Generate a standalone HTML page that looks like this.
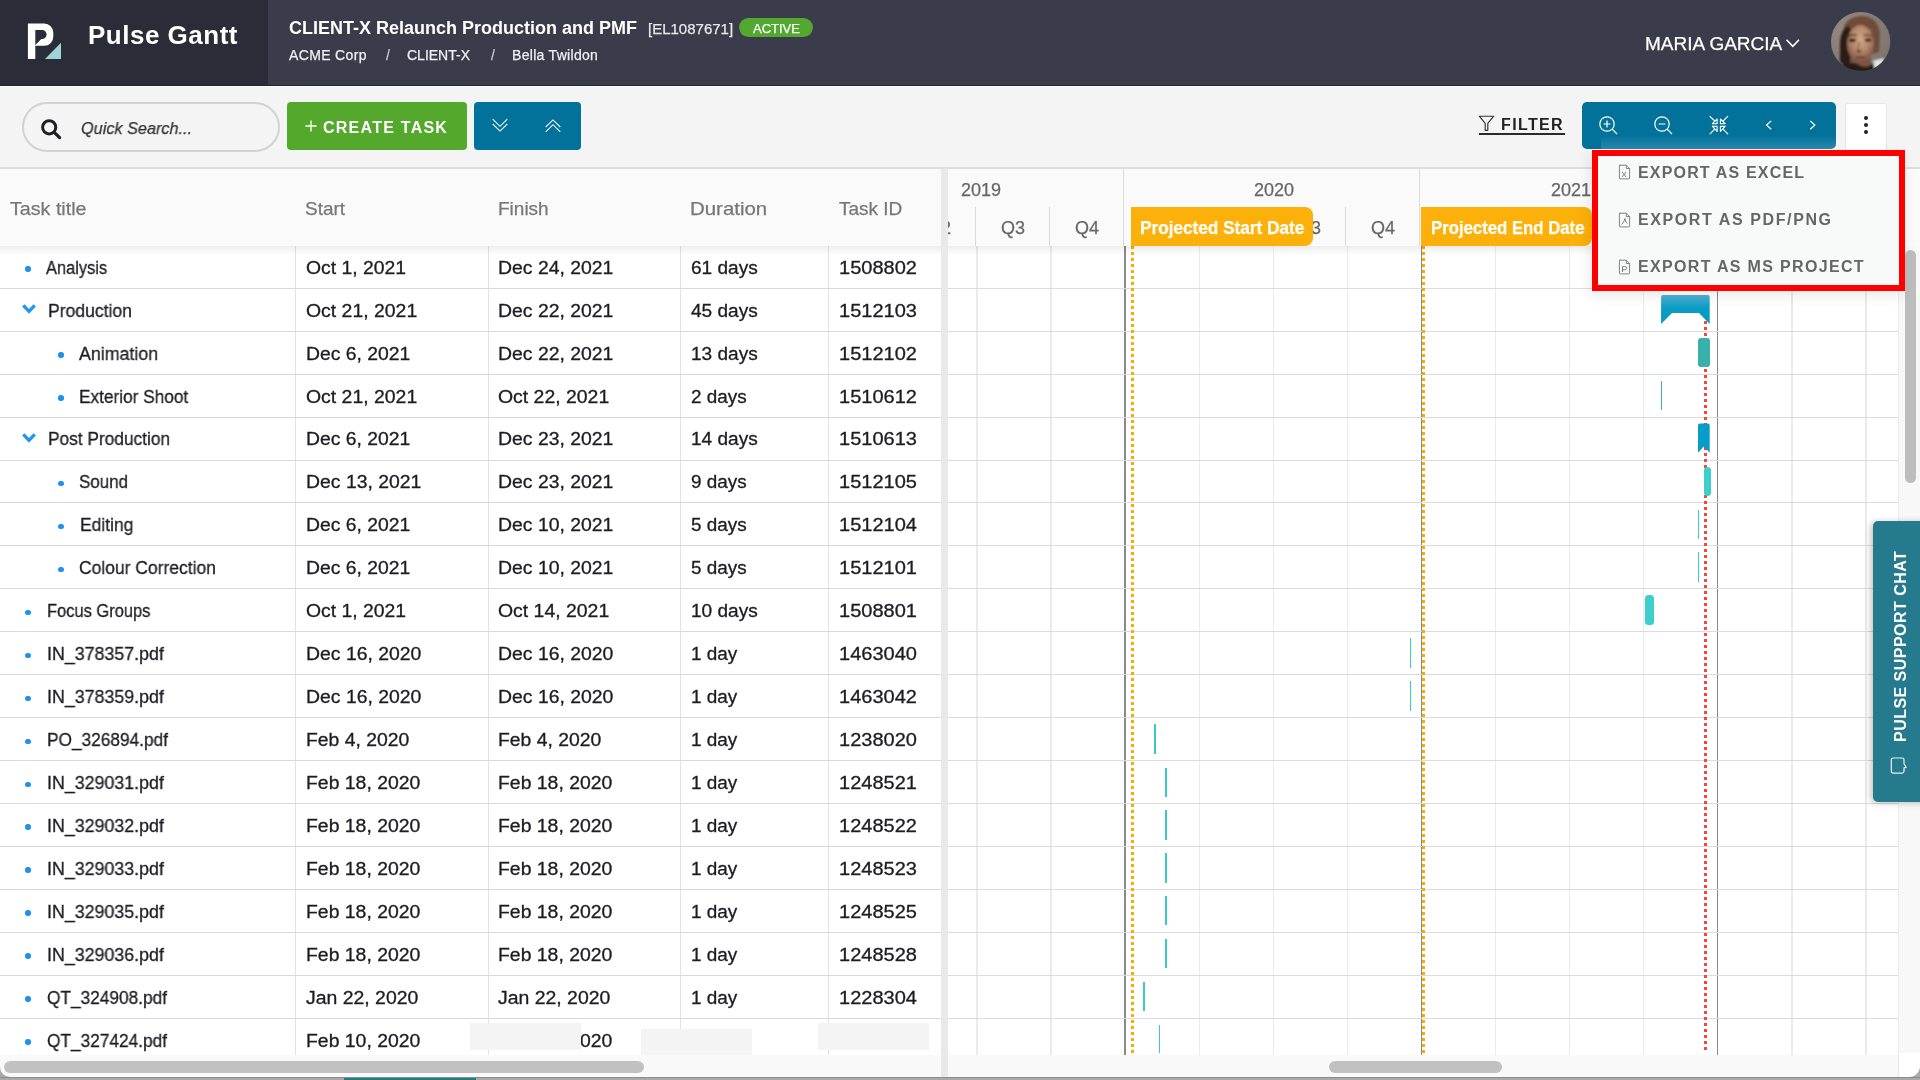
<!DOCTYPE html>
<html><head><meta charset="utf-8"><title>Pulse Gantt</title>
<style>
html,body{margin:0;padding:0;}
body{width:1920px;height:1080px;overflow:hidden;position:relative;background:#f4f4f4;font-family:"Liberation Sans",sans-serif;}
.t{position:absolute;white-space:nowrap;line-height:1;will-change:transform;}
.r{position:absolute;}
svg.r{overflow:visible;}
</style></head><body>
<div class="r" style="left:0px;top:0px;width:1920px;height:86px;background:#3a3b4b;"></div>
<div class="r" style="left:0px;top:0px;width:268px;height:86px;background:#2a2d38;"></div>
<div class="r" style="left:0px;top:85px;width:1920px;height:1px;background:#23242f;"></div>
<div class="r" style="left:0px;top:86px;width:1920px;height:1.3px;background:#ffffff;"></div>
<svg class="r" style="left:0;top:0" width="80" height="85" viewBox="0 0 80 85">
<path d="M27.9 23.6 H44.3 A9 9 0 0 1 53.3 32.6 V36.8 A9 9 0 0 1 44.3 45.8 H35.3 V59 H27.9 Z M35.3 30 H42.1 A4.5 4.5 0 0 1 42.1 39 H41.3 L35.3 45.1 Z" fill="#ffffff" fill-rule="evenodd"/>
<path d="M45 59 L61 42.8 V59 Z" fill="#a0d5d5"/>
</svg>
<div class="t" style="left:88.44px;top:22.29px;font-size:26px;color:#fff;font-weight:700;letter-spacing:0.5px;">Pulse Gantt</div>
<div class="t" style="left:288.92px;top:18.56px;font-size:18px;color:#fff;font-weight:700;">CLIENT-X Relaunch Production and PMF</div>
<div class="t" style="left:648.40px;top:20.90px;font-size:15px;color:#e8e8ea;-webkit-text-stroke:0.25px #e8e8ea;">[EL1087671]</div>
<div class="r" style="left:739px;top:18px;width:74px;height:19px;background:#53a92f;border-radius:10px;"></div>
<div class="t" style="left:752.62px;top:21.80px;font-size:13px;color:#fff;-webkit-text-stroke:0.25px #fff;">ACTIVE</div>
<div class="t" style="left:289.16px;top:48.45px;font-size:14px;color:#f0f0f2;letter-spacing:0.35px;-webkit-text-stroke:0.25px #f0f0f2;">ACME Corp</div>
<div class="t" style="left:386.16px;top:48.45px;font-size:14px;color:#c8c8cc;-webkit-text-stroke:0.25px #c8c8cc;">/</div>
<div class="t" style="left:407.16px;top:48.45px;font-size:14px;color:#f0f0f2;-webkit-text-stroke:0.25px #f0f0f2;">CLIENT-X</div>
<div class="t" style="left:490.66px;top:48.45px;font-size:14px;color:#c8c8cc;-webkit-text-stroke:0.25px #c8c8cc;">/</div>
<div class="t" style="left:511.76px;top:48.45px;font-size:14px;color:#f0f0f2;letter-spacing:0.3px;-webkit-text-stroke:0.25px #f0f0f2;">Bella Twildon</div>
<div class="t" style="left:1644.86px;top:34.02px;font-size:19px;color:#fff;-webkit-text-stroke:0.25px #fff;">MARIA GARCIA</div>
<svg class="r" style="left:1784px;top:36px" width="18" height="14" viewBox="0 0 18 14"><path d="M2.5 3.8 L8.8 10.4 L15 3.8" fill="none" stroke="#fff" stroke-width="1.6"/></svg>
<svg class="r" style="left:1831px;top:11.7px" width="59.3" height="59.3" viewBox="0 0 59.3 59.3"><defs><clipPath id="avc"><circle cx="29.65" cy="29.65" r="29.65"/></clipPath>
<radialGradient id="face" cx="0.5" cy="0.38" r="0.62"><stop offset="0" stop-color="#d2a688"/><stop offset="0.5" stop-color="#b98a6c"/><stop offset="1" stop-color="#7a5040"/></radialGradient>
<radialGradient id="bgav" cx="0.3" cy="0.3" r="0.8"><stop offset="0" stop-color="#968c83"/><stop offset="1" stop-color="#7c736b"/></radialGradient>
<filter id="avb" x="-20%" y="-20%" width="140%" height="140%"><feGaussianBlur stdDeviation="0.9"/></filter></defs>
<g clip-path="url(#avc)">
<rect x="0" y="0" width="60" height="60" fill="url(#bgav)"/><g filter="url(#avb)">
<path d="M12 22 Q12 5 30 4 Q47 4 49 22 L48 40 L41 42 L40 18 Q30 12 19 18 L18 48 L10 46 Z" fill="#6f4b3b"/>
<path d="M9 30 Q10 16 18 14 L21 20 L20 50 Q14 54 9 50 Z" fill="#2c1e19"/>
<path d="M20 42 H39 L41 58 H18 Z" fill="#7d5443"/>
<ellipse cx="29.5" cy="32" rx="13.5" ry="19" fill="url(#face)"/>
<path d="M16.5 24.5 Q21 22 26 23.5" fill="none" stroke="#3b2a22" stroke-width="1.6"/>
<path d="M32.5 23.5 Q37 22 41.5 24.5" fill="none" stroke="#4a3428" stroke-width="1.4"/>
<ellipse cx="21.5" cy="28.3" rx="3.6" ry="1.9" fill="#2f211b"/>
<ellipse cx="37" cy="28" rx="3.4" ry="1.8" fill="#3e2c23"/>
<path d="M28.5 30 Q27 35 26.5 38.5" fill="none" stroke="#8a5e48" stroke-width="1.3"/>
<ellipse cx="28" cy="39.3" rx="2.6" ry="1.3" fill="#5e3c2e"/>
<ellipse cx="29.5" cy="45.2" rx="5.2" ry="1.4" fill="#73483a"/>
<path d="M11 52 Q22 48 30 54 Q38 57 44 49 L47 60 H10 Z" fill="#281a15"/>
<path d="M42 48.5 L53 46 L51 59 L44 60 Z" fill="#e2e2e2"/>
</g></g></svg>
<div class="r" style="left:0px;top:87.3px;width:1920px;height:80px;background:#f4f4f4;"></div>
<div class="r" style="left:22px;top:102px;width:254px;height:46px;border:2px solid #d2d2d2;border-radius:26px;background:#f4f4f4;"></div>
<svg class="r" style="left:38px;top:116px" width="26" height="26" viewBox="0 0 26 26"><circle cx="11.2" cy="11.3" r="6.6" fill="none" stroke="#1e1e24" stroke-width="3"/><path d="M16 16.2 L21.6 21.6" stroke="#1e1e24" stroke-width="3.2" stroke-linecap="round"/></svg>
<div class="t" style="left:80.98px;top:120.31px;font-size:17px;color:#333;font-style:italic;transform:scaleX(0.956);transform-origin:0 0;-webkit-text-stroke:0.25px #333;">Quick Search...</div>
<div class="r" style="left:287px;top:102px;width:180px;height:48px;background:#54a92d;border-radius:4px;"></div>
<svg class="r" style="left:303px;top:118px" width="16" height="16" viewBox="0 0 16 16"><path d="M8 2.6 V13.4 M2.4 8 H13.6" stroke="#fff" stroke-width="1.35"/></svg>
<div class="t" style="left:323.44px;top:119.76px;font-size:16px;color:#fff;font-weight:700;letter-spacing:1.25px;">CREATE TASK</div>
<div class="r" style="left:474px;top:102px;width:107px;height:48px;background:#03729b;border-radius:4px;"></div>
<svg class="r" style="left:487.6px;top:114px" width="24" height="22" viewBox="0 0 24 22"><path d="M4.7 5.2 L12 12.3 L19.3 5.2 M4.7 10 L12 17.1 L19.3 10" fill="none" stroke="#f0f6f8" stroke-width="1.1"/></svg>
<svg class="r" style="left:541px;top:114.8px" width="24" height="22" viewBox="0 0 24 22"><path d="M4.7 12 L12 4.9 L19.3 12 M4.7 16.8 L12 9.7 L19.3 16.8" fill="none" stroke="#f0f6f8" stroke-width="1.1"/></svg>
<svg class="r" style="left:1476px;top:113px" width="20" height="20" viewBox="0 0 20 20"><path d="M3.3 3.2 H17.7 L11.8 10.4 V17.3 L9.2 17.3 V10.4 Z" fill="none" stroke="#333" stroke-width="1.15" stroke-linejoin="round"/></svg>
<div class="t" style="left:1501.04px;top:116.66px;font-size:16px;color:#222;font-weight:700;letter-spacing:1.36px;">FILTER</div>
<div class="r" style="left:1479px;top:133.4px;width:86px;height:1.9px;background:#2a2a2a;"></div>
<div class="r" style="left:1582px;top:102px;width:254px;height:47px;background:#03729b;border-radius:5px;"></div>
<svg class="r" style="left:1594px;top:111px" width="28" height="28" viewBox="0 0 28 28"><circle cx="13" cy="13" r="7.2" fill="none" stroke="#fff" stroke-width="1.2"/><path d="M13 9.6 V16.4 M9.6 13 H16.4 M18.2 18.2 L23 23" stroke="#fff" stroke-width="1.2"/></svg>
<svg class="r" style="left:1649px;top:111px" width="28" height="28" viewBox="0 0 28 28"><circle cx="13" cy="13" r="7.2" fill="none" stroke="#fff" stroke-width="1.2"/><path d="M9.6 13 H16.4 M18.2 18.2 L23 23" stroke="#fff" stroke-width="1.2"/></svg>
<svg class="r" style="left:1706px;top:112px" width="26" height="26" viewBox="0 0 26 26"><g fill="none" stroke="#fff" stroke-width="1.1" stroke-linejoin="round" stroke-linecap="round"><path d="M4 4.3 L8.7 9"/><path d="M6.4 11.7 L11.1 7 V11.7 Z"/><path d="M21.7 4.3 L17.1 9"/><path d="M14.4 7 L19.2 11.7 H14.4 Z"/><path d="M4 21.8 L8.7 17.2"/><path d="M6.4 14.4 H11.1 V19.4 Z"/><path d="M21.7 21.8 L17.1 17.2"/><path d="M14.4 14.4 H19.2 L14.4 19.4 Z"/></g></svg>
<svg class="r" style="left:1760px;top:116px" width="16" height="18" viewBox="0 0 16 18"><path d="M11.2 4.9 L6.6 9.1 L11.2 13.3" fill="none" stroke="#fff" stroke-width="1.25"/></svg>
<svg class="r" style="left:1804px;top:116px" width="16" height="18" viewBox="0 0 16 18"><path d="M6.2 4.9 L10.8 9.1 L6.2 13.3" fill="none" stroke="#fff" stroke-width="1.25"/></svg>
<div class="r" style="left:1845.3px;top:102.5px;width:40px;height:46px;background:#fff;border:1.5px solid #e6e6e6;border-radius:3px;"></div>
<div class="r" style="left:1864px;top:116.2px;width:4.2px;height:4.2px;border-radius:50%;background:#222;"></div>
<div class="r" style="left:1864px;top:123.1px;width:4.2px;height:4.2px;border-radius:50%;background:#222;"></div>
<div class="r" style="left:1864px;top:129.9px;width:4.2px;height:4.2px;border-radius:50%;background:#222;"></div>
<div class="r" style="left:0px;top:167px;width:1920px;height:2px;background:#dcdddd;"></div>
<div class="r" style="left:0px;top:169px;width:1920px;height:886px;background:#ffffff;"></div>
<div class="r" style="left:0px;top:1055px;width:1920px;height:25px;background:#a9a9a9;"></div>
<div class="r" style="left:0px;top:169px;width:941px;height:77px;background:#fafafa;"></div>
<div class="r" style="left:948px;top:169px;width:950px;height:77px;background:#fafafa;"></div>
<div class="r" style="left:1898px;top:169px;width:22px;height:77px;background:#fafafa;"></div>
<div class="t" style="left:9.66px;top:198.92px;font-size:19px;color:#777;transform:scaleX(1.035);transform-origin:0 0;-webkit-text-stroke:0.25px #777;">Task title</div>
<div class="t" style="left:305.46px;top:198.92px;font-size:19px;color:#777;-webkit-text-stroke:0.25px #777;">Start</div>
<div class="t" style="left:497.86px;top:198.92px;font-size:19px;color:#777;-webkit-text-stroke:0.25px #777;">Finish</div>
<div class="t" style="left:690.46px;top:198.92px;font-size:19px;color:#777;transform:scaleX(1.075);transform-origin:0 0;-webkit-text-stroke:0.25px #777;">Duration</div>
<div class="t" style="left:838.86px;top:198.92px;font-size:19px;color:#777;-webkit-text-stroke:0.25px #777;">Task ID</div>
<div class="r" style="left:0;top:246px;width:941px;height:809px;overflow:hidden;">
<div class="r" style="left:295px;top:0px;width:1px;height:809px;background:#e2e2e2;"></div>
<div class="r" style="left:488px;top:0px;width:1px;height:809px;background:#e2e2e2;"></div>
<div class="r" style="left:680px;top:0px;width:1px;height:809px;background:#e2e2e2;"></div>
<div class="r" style="left:828px;top:0px;width:1px;height:809px;background:#e2e2e2;"></div>
<div class="r" style="left:0;top:42px;width:941px;height:1px;background:#d9d9d9;"></div>
<div class="r" style="left:25.3px;top:20.40px;width:5.4px;height:5.4px;border-radius:50%;background:#1f92f0;"></div>
<div class="t" style="left:45.92px;top:12.76px;font-size:18px;color:#1c1c22;transform:scaleX(0.913);transform-origin:0 0;-webkit-text-stroke:0.3px #1c1c22;">Analysis</div>
<div class="t" style="left:305.52px;top:12.76px;font-size:18px;color:#1c1c22;transform:scaleX(1.075638949754439);transform-origin:0 0;-webkit-text-stroke:0.3px #1c1c22;">Oct 1, 2021</div>
<div class="t" style="left:497.92px;top:12.76px;font-size:18px;color:#1c1c22;transform:scaleX(1.0774293770007388);transform-origin:0 0;-webkit-text-stroke:0.3px #1c1c22;">Dec 24, 2021</div>
<div class="t" style="left:690.52px;top:12.76px;font-size:18px;color:#1c1c22;transform:scaleX(1.0585441935034157);transform-origin:0 0;-webkit-text-stroke:0.3px #1c1c22;">61 days</div>
<div class="t" style="left:838.92px;top:12.76px;font-size:18px;color:#1c1c22;transform:scaleX(1.1115);transform-origin:0 0;-webkit-text-stroke:0.3px #1c1c22;">1508802</div>
<div class="r" style="left:0;top:85px;width:941px;height:1px;background:#d9d9d9;"></div>
<svg class="r" style="left:20px;top:57.43px" width="18" height="14" viewBox="0 0 18 14"><path d="M3.3 2.3 L9 8.3 L14.7 2.3" fill="none" stroke="#2196f3" stroke-width="3.3"/></svg>
<div class="t" style="left:48.12px;top:55.69px;font-size:18px;color:#1c1c22;transform:scaleX(0.976);transform-origin:0 0;-webkit-text-stroke:0.3px #1c1c22;">Production</div>
<div class="t" style="left:305.52px;top:55.69px;font-size:18px;color:#1c1c22;transform:scaleX(1.0791220005116398);transform-origin:0 0;-webkit-text-stroke:0.3px #1c1c22;">Oct 21, 2021</div>
<div class="t" style="left:497.92px;top:55.69px;font-size:18px;color:#1c1c22;transform:scaleX(1.0774293770007388);transform-origin:0 0;-webkit-text-stroke:0.3px #1c1c22;">Dec 22, 2021</div>
<div class="t" style="left:690.52px;top:55.69px;font-size:18px;color:#1c1c22;transform:scaleX(1.0585441935034157);transform-origin:0 0;-webkit-text-stroke:0.3px #1c1c22;">45 days</div>
<div class="t" style="left:838.92px;top:55.69px;font-size:18px;color:#1c1c22;transform:scaleX(1.1115);transform-origin:0 0;-webkit-text-stroke:0.3px #1c1c22;">1512103</div>
<div class="r" style="left:0;top:128px;width:941px;height:1px;background:#d9d9d9;"></div>
<div class="r" style="left:58.3px;top:106.26px;width:5.4px;height:5.4px;border-radius:50%;background:#1f92f0;"></div>
<div class="t" style="left:78.72px;top:98.62px;font-size:18px;color:#1c1c22;transform:scaleX(0.989);transform-origin:0 0;-webkit-text-stroke:0.3px #1c1c22;">Animation</div>
<div class="t" style="left:305.52px;top:98.62px;font-size:18px;color:#1c1c22;transform:scaleX(1.073915574067367);transform-origin:0 0;-webkit-text-stroke:0.3px #1c1c22;">Dec 6, 2021</div>
<div class="t" style="left:497.92px;top:98.62px;font-size:18px;color:#1c1c22;transform:scaleX(1.0774293770007388);transform-origin:0 0;-webkit-text-stroke:0.3px #1c1c22;">Dec 22, 2021</div>
<div class="t" style="left:690.52px;top:98.62px;font-size:18px;color:#1c1c22;transform:scaleX(1.0585441935034157);transform-origin:0 0;-webkit-text-stroke:0.3px #1c1c22;">13 days</div>
<div class="t" style="left:838.92px;top:98.62px;font-size:18px;color:#1c1c22;transform:scaleX(1.1115);transform-origin:0 0;-webkit-text-stroke:0.3px #1c1c22;">1512102</div>
<div class="r" style="left:0;top:171px;width:941px;height:1px;background:#d9d9d9;"></div>
<div class="r" style="left:58.3px;top:149.19px;width:5.4px;height:5.4px;border-radius:50%;background:#1f92f0;"></div>
<div class="t" style="left:79.22px;top:141.55px;font-size:18px;color:#1c1c22;transform:scaleX(0.958);transform-origin:0 0;-webkit-text-stroke:0.3px #1c1c22;">Exterior Shoot</div>
<div class="t" style="left:305.52px;top:141.55px;font-size:18px;color:#1c1c22;transform:scaleX(1.0791220005116398);transform-origin:0 0;-webkit-text-stroke:0.3px #1c1c22;">Oct 21, 2021</div>
<div class="t" style="left:497.92px;top:141.55px;font-size:18px;color:#1c1c22;transform:scaleX(1.0791220005116398);transform-origin:0 0;-webkit-text-stroke:0.3px #1c1c22;">Oct 22, 2021</div>
<div class="t" style="left:690.52px;top:141.55px;font-size:18px;color:#1c1c22;transform:scaleX(1.0485480609877362);transform-origin:0 0;-webkit-text-stroke:0.3px #1c1c22;">2 days</div>
<div class="t" style="left:838.92px;top:141.55px;font-size:18px;color:#1c1c22;transform:scaleX(1.1115);transform-origin:0 0;-webkit-text-stroke:0.3px #1c1c22;">1510612</div>
<div class="r" style="left:0;top:214px;width:941px;height:1px;background:#d9d9d9;"></div>
<svg class="r" style="left:20px;top:186.22px" width="18" height="14" viewBox="0 0 18 14"><path d="M3.3 2.3 L9 8.3 L14.7 2.3" fill="none" stroke="#2196f3" stroke-width="3.3"/></svg>
<div class="t" style="left:48.12px;top:184.48px;font-size:18px;color:#1c1c22;transform:scaleX(0.961);transform-origin:0 0;-webkit-text-stroke:0.3px #1c1c22;">Post Production</div>
<div class="t" style="left:305.52px;top:184.48px;font-size:18px;color:#1c1c22;transform:scaleX(1.073915574067367);transform-origin:0 0;-webkit-text-stroke:0.3px #1c1c22;">Dec 6, 2021</div>
<div class="t" style="left:497.92px;top:184.48px;font-size:18px;color:#1c1c22;transform:scaleX(1.0774293770007388);transform-origin:0 0;-webkit-text-stroke:0.3px #1c1c22;">Dec 23, 2021</div>
<div class="t" style="left:690.52px;top:184.48px;font-size:18px;color:#1c1c22;transform:scaleX(1.0585441935034157);transform-origin:0 0;-webkit-text-stroke:0.3px #1c1c22;">14 days</div>
<div class="t" style="left:838.92px;top:184.48px;font-size:18px;color:#1c1c22;transform:scaleX(1.1115);transform-origin:0 0;-webkit-text-stroke:0.3px #1c1c22;">1510613</div>
<div class="r" style="left:0;top:256px;width:941px;height:1px;background:#d9d9d9;"></div>
<div class="r" style="left:58.3px;top:235.05px;width:5.4px;height:5.4px;border-radius:50%;background:#1f92f0;"></div>
<div class="t" style="left:79.22px;top:227.41px;font-size:18px;color:#1c1c22;transform:scaleX(0.942);transform-origin:0 0;-webkit-text-stroke:0.3px #1c1c22;">Sound</div>
<div class="t" style="left:305.52px;top:227.41px;font-size:18px;color:#1c1c22;transform:scaleX(1.0774293770007388);transform-origin:0 0;-webkit-text-stroke:0.3px #1c1c22;">Dec 13, 2021</div>
<div class="t" style="left:497.92px;top:227.41px;font-size:18px;color:#1c1c22;transform:scaleX(1.0774293770007388);transform-origin:0 0;-webkit-text-stroke:0.3px #1c1c22;">Dec 23, 2021</div>
<div class="t" style="left:690.52px;top:227.41px;font-size:18px;color:#1c1c22;transform:scaleX(1.0485480609877362);transform-origin:0 0;-webkit-text-stroke:0.3px #1c1c22;">9 days</div>
<div class="t" style="left:838.92px;top:227.41px;font-size:18px;color:#1c1c22;transform:scaleX(1.1115);transform-origin:0 0;-webkit-text-stroke:0.3px #1c1c22;">1512105</div>
<div class="r" style="left:0;top:299px;width:941px;height:1px;background:#d9d9d9;"></div>
<div class="r" style="left:58.3px;top:277.98px;width:5.4px;height:5.4px;border-radius:50%;background:#1f92f0;"></div>
<div class="t" style="left:79.62px;top:270.34px;font-size:18px;color:#1c1c22;transform:scaleX(0.97);transform-origin:0 0;-webkit-text-stroke:0.3px #1c1c22;">Editing</div>
<div class="t" style="left:305.52px;top:270.34px;font-size:18px;color:#1c1c22;transform:scaleX(1.073915574067367);transform-origin:0 0;-webkit-text-stroke:0.3px #1c1c22;">Dec 6, 2021</div>
<div class="t" style="left:497.92px;top:270.34px;font-size:18px;color:#1c1c22;transform:scaleX(1.0774293770007388);transform-origin:0 0;-webkit-text-stroke:0.3px #1c1c22;">Dec 10, 2021</div>
<div class="t" style="left:690.52px;top:270.34px;font-size:18px;color:#1c1c22;transform:scaleX(1.0485480609877362);transform-origin:0 0;-webkit-text-stroke:0.3px #1c1c22;">5 days</div>
<div class="t" style="left:838.92px;top:270.34px;font-size:18px;color:#1c1c22;transform:scaleX(1.1115);transform-origin:0 0;-webkit-text-stroke:0.3px #1c1c22;">1512104</div>
<div class="r" style="left:0;top:342px;width:941px;height:1px;background:#d9d9d9;"></div>
<div class="r" style="left:58.3px;top:320.91px;width:5.4px;height:5.4px;border-radius:50%;background:#1f92f0;"></div>
<div class="t" style="left:79.32px;top:313.27px;font-size:18px;color:#1c1c22;transform:scaleX(0.971);transform-origin:0 0;-webkit-text-stroke:0.3px #1c1c22;">Colour Correction</div>
<div class="t" style="left:305.52px;top:313.27px;font-size:18px;color:#1c1c22;transform:scaleX(1.073915574067367);transform-origin:0 0;-webkit-text-stroke:0.3px #1c1c22;">Dec 6, 2021</div>
<div class="t" style="left:497.92px;top:313.27px;font-size:18px;color:#1c1c22;transform:scaleX(1.0774293770007388);transform-origin:0 0;-webkit-text-stroke:0.3px #1c1c22;">Dec 10, 2021</div>
<div class="t" style="left:690.52px;top:313.27px;font-size:18px;color:#1c1c22;transform:scaleX(1.0485480609877362);transform-origin:0 0;-webkit-text-stroke:0.3px #1c1c22;">5 days</div>
<div class="t" style="left:838.92px;top:313.27px;font-size:18px;color:#1c1c22;transform:scaleX(1.1115);transform-origin:0 0;-webkit-text-stroke:0.3px #1c1c22;">1512101</div>
<div class="r" style="left:0;top:385px;width:941px;height:1px;background:#d9d9d9;"></div>
<div class="r" style="left:25.3px;top:363.84px;width:5.4px;height:5.4px;border-radius:50%;background:#1f92f0;"></div>
<div class="t" style="left:46.82px;top:356.20px;font-size:18px;color:#1c1c22;transform:scaleX(0.915);transform-origin:0 0;-webkit-text-stroke:0.3px #1c1c22;">Focus Groups</div>
<div class="t" style="left:305.52px;top:356.20px;font-size:18px;color:#1c1c22;transform:scaleX(1.075638949754439);transform-origin:0 0;-webkit-text-stroke:0.3px #1c1c22;">Oct 1, 2021</div>
<div class="t" style="left:497.92px;top:356.20px;font-size:18px;color:#1c1c22;transform:scaleX(1.0791220005116398);transform-origin:0 0;-webkit-text-stroke:0.3px #1c1c22;">Oct 14, 2021</div>
<div class="t" style="left:690.52px;top:356.20px;font-size:18px;color:#1c1c22;transform:scaleX(1.0585441935034157);transform-origin:0 0;-webkit-text-stroke:0.3px #1c1c22;">10 days</div>
<div class="t" style="left:838.92px;top:356.20px;font-size:18px;color:#1c1c22;transform:scaleX(1.1115);transform-origin:0 0;-webkit-text-stroke:0.3px #1c1c22;">1508801</div>
<div class="r" style="left:0;top:428px;width:941px;height:1px;background:#d9d9d9;"></div>
<div class="r" style="left:25.3px;top:406.77px;width:5.4px;height:5.4px;border-radius:50%;background:#1f92f0;"></div>
<div class="t" style="left:46.72px;top:399.13px;font-size:18px;color:#1c1c22;transform:scaleX(0.99);transform-origin:0 0;-webkit-text-stroke:0.3px #1c1c22;">IN_378357.pdf</div>
<div class="t" style="left:305.52px;top:399.13px;font-size:18px;color:#1c1c22;transform:scaleX(1.0774293770007388);transform-origin:0 0;-webkit-text-stroke:0.3px #1c1c22;">Dec 16, 2020</div>
<div class="t" style="left:497.92px;top:399.13px;font-size:18px;color:#1c1c22;transform:scaleX(1.0774293770007388);transform-origin:0 0;-webkit-text-stroke:0.3px #1c1c22;">Dec 16, 2020</div>
<div class="t" style="left:690.52px;top:399.13px;font-size:18px;color:#1c1c22;transform:scaleX(1.051541996007984);transform-origin:0 0;-webkit-text-stroke:0.3px #1c1c22;">1 day</div>
<div class="t" style="left:838.92px;top:399.13px;font-size:18px;color:#1c1c22;transform:scaleX(1.1115);transform-origin:0 0;-webkit-text-stroke:0.3px #1c1c22;">1463040</div>
<div class="r" style="left:0;top:471px;width:941px;height:1px;background:#d9d9d9;"></div>
<div class="r" style="left:25.3px;top:449.70px;width:5.4px;height:5.4px;border-radius:50%;background:#1f92f0;"></div>
<div class="t" style="left:46.72px;top:442.06px;font-size:18px;color:#1c1c22;transform:scaleX(0.99);transform-origin:0 0;-webkit-text-stroke:0.3px #1c1c22;">IN_378359.pdf</div>
<div class="t" style="left:305.52px;top:442.06px;font-size:18px;color:#1c1c22;transform:scaleX(1.0774293770007388);transform-origin:0 0;-webkit-text-stroke:0.3px #1c1c22;">Dec 16, 2020</div>
<div class="t" style="left:497.92px;top:442.06px;font-size:18px;color:#1c1c22;transform:scaleX(1.0774293770007388);transform-origin:0 0;-webkit-text-stroke:0.3px #1c1c22;">Dec 16, 2020</div>
<div class="t" style="left:690.52px;top:442.06px;font-size:18px;color:#1c1c22;transform:scaleX(1.051541996007984);transform-origin:0 0;-webkit-text-stroke:0.3px #1c1c22;">1 day</div>
<div class="t" style="left:838.92px;top:442.06px;font-size:18px;color:#1c1c22;transform:scaleX(1.1115);transform-origin:0 0;-webkit-text-stroke:0.3px #1c1c22;">1463042</div>
<div class="r" style="left:0;top:514px;width:941px;height:1px;background:#d9d9d9;"></div>
<div class="r" style="left:25.3px;top:492.63px;width:5.4px;height:5.4px;border-radius:50%;background:#1f92f0;"></div>
<div class="t" style="left:46.82px;top:484.99px;font-size:18px;color:#1c1c22;transform:scaleX(0.96);transform-origin:0 0;-webkit-text-stroke:0.3px #1c1c22;">PO_326894.pdf</div>
<div class="t" style="left:305.52px;top:484.99px;font-size:18px;color:#1c1c22;transform:scaleX(1.0743292379471228);transform-origin:0 0;-webkit-text-stroke:0.3px #1c1c22;">Feb 4, 2020</div>
<div class="t" style="left:497.92px;top:484.99px;font-size:18px;color:#1c1c22;transform:scaleX(1.0743292379471228);transform-origin:0 0;-webkit-text-stroke:0.3px #1c1c22;">Feb 4, 2020</div>
<div class="t" style="left:690.52px;top:484.99px;font-size:18px;color:#1c1c22;transform:scaleX(1.051541996007984);transform-origin:0 0;-webkit-text-stroke:0.3px #1c1c22;">1 day</div>
<div class="t" style="left:838.92px;top:484.99px;font-size:18px;color:#1c1c22;transform:scaleX(1.1115);transform-origin:0 0;-webkit-text-stroke:0.3px #1c1c22;">1238020</div>
<div class="r" style="left:0;top:557px;width:941px;height:1px;background:#d9d9d9;"></div>
<div class="r" style="left:25.3px;top:535.56px;width:5.4px;height:5.4px;border-radius:50%;background:#1f92f0;"></div>
<div class="t" style="left:46.72px;top:527.92px;font-size:18px;color:#1c1c22;transform:scaleX(0.99);transform-origin:0 0;-webkit-text-stroke:0.3px #1c1c22;">IN_329031.pdf</div>
<div class="t" style="left:305.52px;top:527.92px;font-size:18px;color:#1c1c22;transform:scaleX(1.0778369014084506);transform-origin:0 0;-webkit-text-stroke:0.3px #1c1c22;">Feb 18, 2020</div>
<div class="t" style="left:497.92px;top:527.92px;font-size:18px;color:#1c1c22;transform:scaleX(1.0778369014084506);transform-origin:0 0;-webkit-text-stroke:0.3px #1c1c22;">Feb 18, 2020</div>
<div class="t" style="left:690.52px;top:527.92px;font-size:18px;color:#1c1c22;transform:scaleX(1.051541996007984);transform-origin:0 0;-webkit-text-stroke:0.3px #1c1c22;">1 day</div>
<div class="t" style="left:838.92px;top:527.92px;font-size:18px;color:#1c1c22;transform:scaleX(1.1115);transform-origin:0 0;-webkit-text-stroke:0.3px #1c1c22;">1248521</div>
<div class="r" style="left:0;top:600px;width:941px;height:1px;background:#d9d9d9;"></div>
<div class="r" style="left:25.3px;top:578.49px;width:5.4px;height:5.4px;border-radius:50%;background:#1f92f0;"></div>
<div class="t" style="left:46.72px;top:570.85px;font-size:18px;color:#1c1c22;transform:scaleX(0.99);transform-origin:0 0;-webkit-text-stroke:0.3px #1c1c22;">IN_329032.pdf</div>
<div class="t" style="left:305.52px;top:570.85px;font-size:18px;color:#1c1c22;transform:scaleX(1.0778369014084506);transform-origin:0 0;-webkit-text-stroke:0.3px #1c1c22;">Feb 18, 2020</div>
<div class="t" style="left:497.92px;top:570.85px;font-size:18px;color:#1c1c22;transform:scaleX(1.0778369014084506);transform-origin:0 0;-webkit-text-stroke:0.3px #1c1c22;">Feb 18, 2020</div>
<div class="t" style="left:690.52px;top:570.85px;font-size:18px;color:#1c1c22;transform:scaleX(1.051541996007984);transform-origin:0 0;-webkit-text-stroke:0.3px #1c1c22;">1 day</div>
<div class="t" style="left:838.92px;top:570.85px;font-size:18px;color:#1c1c22;transform:scaleX(1.1115);transform-origin:0 0;-webkit-text-stroke:0.3px #1c1c22;">1248522</div>
<div class="r" style="left:0;top:643px;width:941px;height:1px;background:#d9d9d9;"></div>
<div class="r" style="left:25.3px;top:621.42px;width:5.4px;height:5.4px;border-radius:50%;background:#1f92f0;"></div>
<div class="t" style="left:46.72px;top:613.78px;font-size:18px;color:#1c1c22;transform:scaleX(0.99);transform-origin:0 0;-webkit-text-stroke:0.3px #1c1c22;">IN_329033.pdf</div>
<div class="t" style="left:305.52px;top:613.78px;font-size:18px;color:#1c1c22;transform:scaleX(1.0778369014084506);transform-origin:0 0;-webkit-text-stroke:0.3px #1c1c22;">Feb 18, 2020</div>
<div class="t" style="left:497.92px;top:613.78px;font-size:18px;color:#1c1c22;transform:scaleX(1.0778369014084506);transform-origin:0 0;-webkit-text-stroke:0.3px #1c1c22;">Feb 18, 2020</div>
<div class="t" style="left:690.52px;top:613.78px;font-size:18px;color:#1c1c22;transform:scaleX(1.051541996007984);transform-origin:0 0;-webkit-text-stroke:0.3px #1c1c22;">1 day</div>
<div class="t" style="left:838.92px;top:613.78px;font-size:18px;color:#1c1c22;transform:scaleX(1.1115);transform-origin:0 0;-webkit-text-stroke:0.3px #1c1c22;">1248523</div>
<div class="r" style="left:0;top:686px;width:941px;height:1px;background:#d9d9d9;"></div>
<div class="r" style="left:25.3px;top:664.35px;width:5.4px;height:5.4px;border-radius:50%;background:#1f92f0;"></div>
<div class="t" style="left:46.72px;top:656.71px;font-size:18px;color:#1c1c22;transform:scaleX(0.99);transform-origin:0 0;-webkit-text-stroke:0.3px #1c1c22;">IN_329035.pdf</div>
<div class="t" style="left:305.52px;top:656.71px;font-size:18px;color:#1c1c22;transform:scaleX(1.0778369014084506);transform-origin:0 0;-webkit-text-stroke:0.3px #1c1c22;">Feb 18, 2020</div>
<div class="t" style="left:497.92px;top:656.71px;font-size:18px;color:#1c1c22;transform:scaleX(1.0778369014084506);transform-origin:0 0;-webkit-text-stroke:0.3px #1c1c22;">Feb 18, 2020</div>
<div class="t" style="left:690.52px;top:656.71px;font-size:18px;color:#1c1c22;transform:scaleX(1.051541996007984);transform-origin:0 0;-webkit-text-stroke:0.3px #1c1c22;">1 day</div>
<div class="t" style="left:838.92px;top:656.71px;font-size:18px;color:#1c1c22;transform:scaleX(1.1115);transform-origin:0 0;-webkit-text-stroke:0.3px #1c1c22;">1248525</div>
<div class="r" style="left:0;top:729px;width:941px;height:1px;background:#d9d9d9;"></div>
<div class="r" style="left:25.3px;top:707.28px;width:5.4px;height:5.4px;border-radius:50%;background:#1f92f0;"></div>
<div class="t" style="left:46.72px;top:699.64px;font-size:18px;color:#1c1c22;transform:scaleX(0.99);transform-origin:0 0;-webkit-text-stroke:0.3px #1c1c22;">IN_329036.pdf</div>
<div class="t" style="left:305.52px;top:699.64px;font-size:18px;color:#1c1c22;transform:scaleX(1.0778369014084506);transform-origin:0 0;-webkit-text-stroke:0.3px #1c1c22;">Feb 18, 2020</div>
<div class="t" style="left:497.92px;top:699.64px;font-size:18px;color:#1c1c22;transform:scaleX(1.0778369014084506);transform-origin:0 0;-webkit-text-stroke:0.3px #1c1c22;">Feb 18, 2020</div>
<div class="t" style="left:690.52px;top:699.64px;font-size:18px;color:#1c1c22;transform:scaleX(1.051541996007984);transform-origin:0 0;-webkit-text-stroke:0.3px #1c1c22;">1 day</div>
<div class="t" style="left:838.92px;top:699.64px;font-size:18px;color:#1c1c22;transform:scaleX(1.1115);transform-origin:0 0;-webkit-text-stroke:0.3px #1c1c22;">1248528</div>
<div class="r" style="left:0;top:772px;width:941px;height:1px;background:#d9d9d9;"></div>
<div class="r" style="left:25.3px;top:750.21px;width:5.4px;height:5.4px;border-radius:50%;background:#1f92f0;"></div>
<div class="t" style="left:46.82px;top:742.57px;font-size:18px;color:#1c1c22;transform:scaleX(0.96);transform-origin:0 0;-webkit-text-stroke:0.3px #1c1c22;">QT_324908.pdf</div>
<div class="t" style="left:305.52px;top:742.57px;font-size:18px;color:#1c1c22;transform:scaleX(1.0786790593599596);transform-origin:0 0;-webkit-text-stroke:0.3px #1c1c22;">Jan 22, 2020</div>
<div class="t" style="left:497.92px;top:742.57px;font-size:18px;color:#1c1c22;transform:scaleX(1.0786790593599596);transform-origin:0 0;-webkit-text-stroke:0.3px #1c1c22;">Jan 22, 2020</div>
<div class="t" style="left:690.52px;top:742.57px;font-size:18px;color:#1c1c22;transform:scaleX(1.051541996007984);transform-origin:0 0;-webkit-text-stroke:0.3px #1c1c22;">1 day</div>
<div class="t" style="left:838.92px;top:742.57px;font-size:18px;color:#1c1c22;transform:scaleX(1.1115);transform-origin:0 0;-webkit-text-stroke:0.3px #1c1c22;">1228304</div>
<div class="r" style="left:0;top:815px;width:941px;height:1px;background:#d9d9d9;"></div>
<div class="r" style="left:25.3px;top:793.14px;width:5.4px;height:5.4px;border-radius:50%;background:#1f92f0;"></div>
<div class="t" style="left:46.82px;top:785.50px;font-size:18px;color:#1c1c22;transform:scaleX(0.96);transform-origin:0 0;-webkit-text-stroke:0.3px #1c1c22;">QT_327424.pdf</div>
<div class="t" style="left:305.52px;top:785.50px;font-size:18px;color:#1c1c22;transform:scaleX(1.0778369014084506);transform-origin:0 0;-webkit-text-stroke:0.3px #1c1c22;">Feb 10, 2020</div>
<div class="t" style="left:497.92px;top:785.50px;font-size:18px;color:#1c1c22;transform:scaleX(1.0778369014084506);transform-origin:0 0;-webkit-text-stroke:0.3px #1c1c22;">Feb 10, 2020</div>
<div class="t" style="left:690.52px;top:785.50px;font-size:18px;color:#1c1c22;transform:scaleX(1.051541996007984);transform-origin:0 0;-webkit-text-stroke:0.3px #1c1c22;">1 day</div>
<div class="t" style="left:838.92px;top:785.50px;font-size:18px;color:#1c1c22;transform:scaleX(1.1115);transform-origin:0 0;-webkit-text-stroke:0.3px #1c1c22;">1238021</div>
<div class="r" style="left:470px;top:776.7px;width:111px;height:27px;background:#f4f4f4;"></div>
<div class="r" style="left:641px;top:783px;width:111px;height:27px;background:#f4f4f4;"></div>
<div class="r" style="left:818px;top:776.7px;width:111px;height:27px;background:#f4f4f4;"></div>
</div>
<div class="r" style="left:948px;top:169px;width:950px;height:886px;overflow:hidden;">
<div class="r" style="left:-47.57px;top:38px;width:1.3px;height:39px;background:#dadada;"></div>
<div class="r" style="left:26.50px;top:38px;width:1.3px;height:39px;background:#dadada;"></div>
<div class="r" style="left:100.57px;top:38px;width:1.3px;height:39px;background:#dadada;"></div>
<div class="r" style="left:174.64px;top:0;width:1.3px;height:77px;background:#dadada;"></div>
<div class="r" style="left:248.71px;top:38px;width:1.3px;height:39px;background:#dadada;"></div>
<div class="r" style="left:322.78px;top:38px;width:1.3px;height:39px;background:#dadada;"></div>
<div class="r" style="left:396.85px;top:38px;width:1.3px;height:39px;background:#dadada;"></div>
<div class="r" style="left:470.92px;top:0;width:1.3px;height:77px;background:#dadada;"></div>
<div class="r" style="left:544.99px;top:38px;width:1.3px;height:39px;background:#dadada;"></div>
<div class="r" style="left:619.06px;top:38px;width:1.3px;height:39px;background:#dadada;"></div>
<div class="r" style="left:693.13px;top:38px;width:1.3px;height:39px;background:#dadada;"></div>
<div class="r" style="left:767.20px;top:0;width:1.3px;height:77px;background:#dadada;"></div>
<div class="r" style="left:841.27px;top:38px;width:1.3px;height:39px;background:#dadada;"></div>
<div class="r" style="left:915.34px;top:38px;width:1.3px;height:39px;background:#dadada;"></div>
<div class="r" style="left:989.41px;top:38px;width:1.3px;height:39px;background:#dadada;"></div>
<div class="t" style="left:-21.15px;top:49.76px;font-size:18px;color:#666;-webkit-text-stroke:0.25px #666;">Q2</div>
<div class="t" style="left:52.92px;top:49.76px;font-size:18px;color:#666;-webkit-text-stroke:0.25px #666;">Q3</div>
<div class="t" style="left:126.99px;top:49.76px;font-size:18px;color:#666;-webkit-text-stroke:0.25px #666;">Q4</div>
<div class="t" style="left:201.06px;top:49.76px;font-size:18px;color:#666;-webkit-text-stroke:0.25px #666;">Q1</div>
<div class="t" style="left:275.13px;top:49.76px;font-size:18px;color:#666;-webkit-text-stroke:0.25px #666;">Q2</div>
<div class="t" style="left:349.20px;top:49.76px;font-size:18px;color:#666;-webkit-text-stroke:0.25px #666;">Q3</div>
<div class="t" style="left:423.27px;top:49.76px;font-size:18px;color:#666;-webkit-text-stroke:0.25px #666;">Q4</div>
<div class="t" style="left:497.34px;top:49.76px;font-size:18px;color:#666;-webkit-text-stroke:0.25px #666;">Q1</div>
<div class="t" style="left:571.41px;top:49.76px;font-size:18px;color:#666;-webkit-text-stroke:0.25px #666;">Q2</div>
<div class="t" style="left:645.48px;top:49.76px;font-size:18px;color:#666;-webkit-text-stroke:0.25px #666;">Q3</div>
<div class="t" style="left:719.55px;top:49.76px;font-size:18px;color:#666;-webkit-text-stroke:0.25px #666;">Q4</div>
<div class="t" style="left:793.62px;top:49.76px;font-size:18px;color:#666;-webkit-text-stroke:0.25px #666;">Q1</div>
<div class="t" style="left:867.69px;top:49.76px;font-size:18px;color:#666;-webkit-text-stroke:0.25px #666;">Q2</div>
<div class="t" style="left:941.76px;top:49.76px;font-size:18px;color:#666;-webkit-text-stroke:0.25px #666;">Q3</div>
<div class="t" style="left:12.92px;top:11.76px;font-size:18px;color:#666;-webkit-text-stroke:0.25px #666;">2019</div>
<div class="t" style="left:306.12px;top:11.76px;font-size:18px;color:#666;-webkit-text-stroke:0.25px #666;">2020</div>
<div class="t" style="left:602.62px;top:11.76px;font-size:18px;color:#666;-webkit-text-stroke:0.25px #666;">2021</div>
<div class="t" style="left:898.92px;top:11.76px;font-size:18px;color:#666;-webkit-text-stroke:0.25px #666;">2022</div>
<div class="r" style="left:-45.67px;top:77px;width:1.4px;height:809px;background:#ebebeb;"></div>
<div class="r" style="left:28.40px;top:77px;width:1.4px;height:809px;background:#ebebeb;"></div>
<div class="r" style="left:102.47px;top:77px;width:1.4px;height:809px;background:#ebebeb;"></div>
<div class="r" style="left:176.44px;top:77px;width:1.15px;height:809px;background:#8a8a8a;"></div>
<div class="r" style="left:250.61px;top:77px;width:1.4px;height:809px;background:#ebebeb;"></div>
<div class="r" style="left:324.68px;top:77px;width:1.4px;height:809px;background:#ebebeb;"></div>
<div class="r" style="left:398.75px;top:77px;width:1.4px;height:809px;background:#ebebeb;"></div>
<div class="r" style="left:472.72px;top:77px;width:1.15px;height:809px;background:#8a8a8a;"></div>
<div class="r" style="left:546.89px;top:77px;width:1.4px;height:809px;background:#ebebeb;"></div>
<div class="r" style="left:620.96px;top:77px;width:1.4px;height:809px;background:#ebebeb;"></div>
<div class="r" style="left:695.03px;top:77px;width:1.4px;height:809px;background:#ebebeb;"></div>
<div class="r" style="left:769.00px;top:77px;width:1.15px;height:809px;background:#8a8a8a;"></div>
<div class="r" style="left:843.17px;top:77px;width:1.4px;height:809px;background:#ebebeb;"></div>
<div class="r" style="left:917.24px;top:77px;width:1.4px;height:809px;background:#ebebeb;"></div>
<div class="r" style="left:991.31px;top:77px;width:1.4px;height:809px;background:#ebebeb;"></div>
<div class="r" style="left:0;top:119px;width:950px;height:1px;background:#dcdcdc;"></div>
<div class="r" style="left:0;top:162px;width:950px;height:1px;background:#dcdcdc;"></div>
<div class="r" style="left:0;top:205px;width:950px;height:1px;background:#dcdcdc;"></div>
<div class="r" style="left:0;top:248px;width:950px;height:1px;background:#dcdcdc;"></div>
<div class="r" style="left:0;top:291px;width:950px;height:1px;background:#dcdcdc;"></div>
<div class="r" style="left:0;top:333px;width:950px;height:1px;background:#dcdcdc;"></div>
<div class="r" style="left:0;top:376px;width:950px;height:1px;background:#dcdcdc;"></div>
<div class="r" style="left:0;top:419px;width:950px;height:1px;background:#dcdcdc;"></div>
<div class="r" style="left:0;top:462px;width:950px;height:1px;background:#dcdcdc;"></div>
<div class="r" style="left:0;top:505px;width:950px;height:1px;background:#dcdcdc;"></div>
<div class="r" style="left:0;top:548px;width:950px;height:1px;background:#dcdcdc;"></div>
<div class="r" style="left:0;top:591px;width:950px;height:1px;background:#dcdcdc;"></div>
<div class="r" style="left:0;top:634px;width:950px;height:1px;background:#dcdcdc;"></div>
<div class="r" style="left:0;top:677px;width:950px;height:1px;background:#dcdcdc;"></div>
<div class="r" style="left:0;top:720px;width:950px;height:1px;background:#dcdcdc;"></div>
<div class="r" style="left:0;top:763px;width:950px;height:1px;background:#dcdcdc;"></div>
<div class="r" style="left:0;top:806px;width:950px;height:1px;background:#dcdcdc;"></div>
<div class="r" style="left:0;top:849px;width:950px;height:1px;background:#dcdcdc;"></div>
<div class="r" style="left:0;top:892px;width:950px;height:1px;background:#dcdcdc;"></div>
</div>
<div class="r" style="left:1130.6px;top:246px;width:3.0px;height:807px;background:repeating-linear-gradient(to bottom, #f9ab00 0, #f9ab00 3px, transparent 3px, transparent 6px);"></div>
<div class="r" style="left:1421.7px;top:246px;width:3.0px;height:807px;background:repeating-linear-gradient(to bottom, #f9ab00 0, #f9ab00 3px, transparent 3px, transparent 6px);"></div>
<div class="r" style="left:1704.4px;top:297px;width:2.6px;height:756px;background:repeating-linear-gradient(to bottom, #f5473b 0, #f5473b 3px, transparent 3px, transparent 6px);"></div>
<div class="r" style="left:1131px;top:207px;width:182px;height:39px;background:#fbb00a;border-radius:0 8px 8px 0;"></div>
<div class="t" style="left:1139.52px;top:218.66px;font-size:18px;color:#fff;font-weight:700;transform:scaleX(0.955);transform-origin:0 0;-webkit-text-stroke:0.25px #fff;">Projected Start Date</div>
<div class="r" style="left:1421px;top:207px;width:171px;height:39px;background:#fbb00a;border-radius:0 8px 8px 0;"></div>
<div class="t" style="left:1430.72px;top:218.66px;font-size:18px;color:#fff;font-weight:700;transform:scaleX(0.93);transform-origin:0 0;-webkit-text-stroke:0.25px #fff;">Projected End Date</div>
<div class="r" style="left:0;top:246px;width:1898px;height:9px;background:linear-gradient(to bottom, rgba(0,0,0,0.07), rgba(0,0,0,0));"></div>
<svg class="r" style="left:1655px;top:290px" width="60" height="40" viewBox="0 0 60 40"><defs><linearGradient id="pg" x1="0" y1="0" x2="0" y2="1"><stop offset="0" stop-color="#4fb4d2"/><stop offset="0.45" stop-color="#099cc5"/><stop offset="1" stop-color="#069ac3"/></linearGradient></defs><path d="M6.1 7 Q6.1 5 8.1 5 H52.7 Q54.7 5 54.7 7 V33.9 L44 23 H17 L6.1 33.9 Z" fill="url(#pg)"/></svg>
<div class="r" style="left:1698px;top:337.6px;width:11.7px;height:29.7px;background:#38b1ab;border-radius:3px;"></div>
<div class="r" style="left:1660.9px;top:380.6px;width:1.6px;height:29.4px;background:#38b5b0;"></div>
<svg class="r" style="left:1695px;top:420px" width="18" height="36" viewBox="0 0 18 36"><path d="M3 5.5 Q3 3.5 5 3.5 H12.7 Q14.7 3.5 14.7 5.5 V32.7 L8.85 26.5 L3 32.7 Z" fill="#079dc7"/></svg>
<div class="r" style="left:1703.7px;top:466.7px;width:7.3px;height:29.1px;background:#3dcfcc;border-radius:3.5px;"></div>
<div class="r" style="left:1697.8px;top:509.8px;width:1.5px;height:29.1px;background:#3cc8c6;"></div>
<div class="r" style="left:1697.8px;top:552.2px;width:1.5px;height:29.5px;background:#3cc8c6;"></div>
<div class="r" style="left:1644.9px;top:595.1px;width:9.1px;height:29.7px;background:#3dcfcc;border-radius:3.5px;"></div>
<div class="r" style="left:1409.6px;top:638.3px;width:1.6px;height:29.6px;background:#3cc8c6;"></div>
<div class="r" style="left:1409.6px;top:681.3px;width:1.6px;height:29.5px;background:#3cc8c6;"></div>
<div class="r" style="left:1153.9px;top:724px;width:1.8px;height:29.7px;background:#3cc8c6;"></div>
<div class="r" style="left:1165px;top:767.5px;width:1.8px;height:29.2px;background:#3cc8c6;"></div>
<div class="r" style="left:1165px;top:810.43px;width:1.8px;height:29.2px;background:#3cc8c6;"></div>
<div class="r" style="left:1165px;top:853.36px;width:1.8px;height:29.2px;background:#3cc8c6;"></div>
<div class="r" style="left:1165px;top:896.29px;width:1.8px;height:29.2px;background:#3cc8c6;"></div>
<div class="r" style="left:1165px;top:939.22px;width:1.8px;height:29.2px;background:#3cc8c6;"></div>
<div class="r" style="left:1143.3px;top:982px;width:1.8px;height:29.2px;background:#3cc8c6;"></div>
<div class="r" style="left:1158.5px;top:1025px;width:1.8px;height:28px;background:#3cc8c6;"></div>
<div class="r" style="left:941px;top:169px;width:7px;height:908px;background:#e9e9e9;"></div>
<div class="r" style="left:0px;top:1055px;width:941px;height:1px;background:#e6e6e6;"></div>
<div class="r" style="left:948px;top:1055px;width:950px;height:1px;background:#e6e6e6;"></div>
<div class="r" style="left:0;top:1055px;width:941px;height:22px;background:#f9f9f9;border-radius:0 0 0 10px;"></div>
<div class="r" style="left:948px;top:1055px;width:950px;height:22px;background:#f9f9f9;"></div>
<div class="r" style="left:1898px;top:1053px;width:21px;height:24px;background:#ffffff;border-left:1px solid #e8e8e8;border-radius:0 0 11px 0;"></div>
<div class="r" style="left:4px;top:1060.5px;width:640px;height:12px;background:#c1c1c1;border-radius:6px;"></div>
<div class="r" style="left:1329px;top:1060.5px;width:173px;height:12px;background:#c1c1c1;border-radius:6px;"></div>
<div class="r" style="left:1898px;top:246px;width:21px;height:807px;background:#f8f8f8;border-left:1px solid #ececec;"></div>
<div class="r" style="left:1905px;top:250px;width:11px;height:233px;background:#bdbdbd;border-radius:6px;"></div>
<div class="r" style="left:0px;top:1077px;width:1920px;height:1px;background:#8c8c8c;"></div>
<div class="r" style="left:344px;top:1078px;width:132px;height:2px;background:#1d7f7c;"></div>
<div class="r" style="left:1872.5px;top:521px;width:60px;height:281px;background:#267a8d;border-radius:5px;box-shadow:-2px 1px 6px rgba(0,0,0,0.25);"></div>
<div class="t" style="left:1893.4px;top:741.6px;font-size:16px;font-weight:700;color:#fff;letter-spacing:0.47px;transform:rotate(-90deg);transform-origin:0 0;line-height:16px;">PULSE SUPPORT CHAT</div>
<svg class="r" style="left:1889px;top:756px" width="20" height="20" viewBox="0 0 20 20"><path d="M4.1 2 H13.2 Q15 2 15 3.8 V7.8 L17.2 11.3 L15 11.8 V15.3 Q15 17.1 13.2 17.1 H4.1 Q2.3 17.1 2.3 15.3 V3.8 Q2.3 2 4.1 2 Z" fill="none" stroke="#e8f2f4" stroke-width="1.2" stroke-linejoin="round"/></svg>
<div class="r" style="left:1601px;top:136px;width:235px;height:13px;background:linear-gradient(to bottom, rgba(255,255,255,0), rgba(255,255,255,0.16));"></div>
<div class="r" style="left:1592px;top:150px;width:313px;height:141px;background:#f8f9f9;box-shadow:-2px 5px 12px rgba(0,0,0,0.09);"></div>
<div class="r" style="left:1592px;top:150px;width:301px;height:129px;border:6px solid #ff0000;"></div>
<svg class="r" style="left:1617.7px;top:164.3px" width="13" height="16" viewBox="0 0 13 16"><path d="M1.5 1.2 H8.3 L11.6 4.5 V14 Q11.6 14.9 10.7 14.9 H2.3 Q1.4 14.9 1.4 14 V2.1 Q1.4 1.2 2.3 1.2 Z M8.3 1.2 V4.5 H11.6" fill="none" stroke="#777" stroke-width="0.9"/><path d="M4.2 8 L8 13 M8 8 L4.2 13" stroke="#777" stroke-width="0.9"/></svg>
<svg class="r" style="left:1617.7px;top:211.8px" width="13" height="16" viewBox="0 0 13 16"><path d="M1.5 1.2 H8.3 L11.6 4.5 V14 Q11.6 14.9 10.7 14.9 H2.3 Q1.4 14.9 1.4 14 V2.1 Q1.4 1.2 2.3 1.2 Z M8.3 1.2 V4.5 H11.6" fill="none" stroke="#777" stroke-width="0.9"/><path d="M3.5 12.5 Q6 10.5 7 6.5 Q7.5 11 9.5 11.5" fill="none" stroke="#777" stroke-width="0.9"/></svg>
<svg class="r" style="left:1617.7px;top:259.3px" width="13" height="16" viewBox="0 0 13 16"><path d="M1.5 1.2 H8.3 L11.6 4.5 V14 Q11.6 14.9 10.7 14.9 H2.3 Q1.4 14.9 1.4 14 V2.1 Q1.4 1.2 2.3 1.2 Z M8.3 1.2 V4.5 H11.6" fill="none" stroke="#777" stroke-width="0.9"/><path d="M4.5 13 V7.5 H6.8 Q8.5 7.5 8.5 9.2 Q8.5 10.8 6.8 10.8 H4.5" fill="none" stroke="#777" stroke-width="0.9"/></svg>
<div class="t" style="left:1637.84px;top:164.56px;font-size:16px;color:#666;font-weight:700;letter-spacing:1.17px;">EXPORT AS EXCEL</div>
<div class="t" style="left:1637.84px;top:211.66px;font-size:16px;color:#666;font-weight:700;letter-spacing:1.6px;">EXPORT AS PDF/PNG</div>
<div class="t" style="left:1637.84px;top:259.26px;font-size:16px;color:#666;font-weight:700;letter-spacing:1.33px;">EXPORT AS MS PROJECT</div>
</body></html>
